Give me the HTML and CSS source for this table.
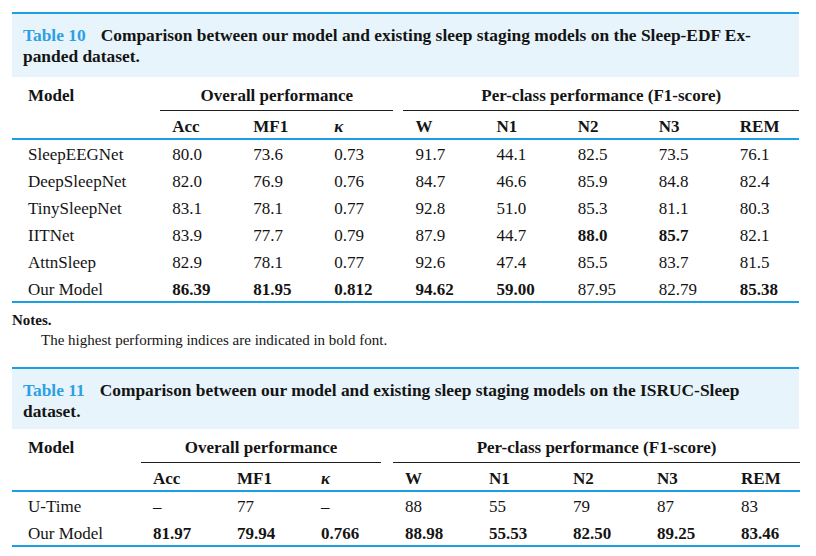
FILE: index.html
```html
<!DOCTYPE html>
<html>
<head>
<meta charset="utf-8">
<link rel="stylesheet" href="styles.css">
</head>
<body>
<div class="page">
  <section class="tbl-block t10">
    <div class="caption"><span class="label">Table 10</span>Comparison between our model and existing sleep staging models on the Sleep-EDF Ex-<br>panded dataset.</div>
    <table>
      <colgroup>
        <col class="c-model"><col class="c-num"><col class="c-num"><col class="c-num"><col class="c-num"><col class="c-num"><col class="c-num"><col class="c-num"><col class="c-last">
      </colgroup>
      <thead>
        <tr class="h1">
          <th class="model">Model</th>
          <th colspan="3" class="grp-cell left"><div class="grp">Overall performance</div></th>
          <th colspan="5" class="grp-cell"><div class="grp">Per-class performance (F1-score)</div></th>
        </tr>
        <tr class="h2">
          <th class="model"></th>
          <th>Acc</th><th>MF1</th><th><i>κ</i></th><th>W</th><th>N1</th><th>N2</th><th>N3</th><th>REM</th>
        </tr>
      </thead>
      <tbody>
        <tr><td class="model">SleepEEGNet</td><td>80.0</td><td>73.6</td><td>0.73</td><td>91.7</td><td>44.1</td><td>82.5</td><td>73.5</td><td>76.1</td></tr>
        <tr><td class="model">DeepSleepNet</td><td>82.0</td><td>76.9</td><td>0.76</td><td>84.7</td><td>46.6</td><td>85.9</td><td>84.8</td><td>82.4</td></tr>
        <tr><td class="model">TinySleepNet</td><td>83.1</td><td>78.1</td><td>0.77</td><td>92.8</td><td>51.0</td><td>85.3</td><td>81.1</td><td>80.3</td></tr>
        <tr><td class="model">IITNet</td><td>83.9</td><td>77.7</td><td>0.79</td><td>87.9</td><td>44.7</td><td><b>88.0</b></td><td><b>85.7</b></td><td>82.1</td></tr>
        <tr><td class="model">AttnSleep</td><td>82.9</td><td>78.1</td><td>0.77</td><td>92.6</td><td>47.4</td><td>85.5</td><td>83.7</td><td>81.5</td></tr>
        <tr class="last"><td class="model">Our Model</td><td><b>86.39</b></td><td><b>81.95</b></td><td><b>0.812</b></td><td><b>94.62</b></td><td><b>59.00</b></td><td>87.95</td><td>82.79</td><td><b>85.38</b></td></tr>
      </tbody>
    </table>
  </section>

  <div class="notes">
    <div class="notes-title">Notes.</div>
    <div class="notes-text">The highest performing indices are indicated in bold font.</div>
  </div>

  <section class="tbl-block t11">
    <div class="caption"><span class="label">Table 11</span>Comparison between our model and existing sleep staging models on the ISRUC-Sleep<br>dataset.</div>
    <table>
      <colgroup>
        <col class="c-model"><col class="c-num"><col class="c-num"><col class="c-num"><col class="c-num"><col class="c-num"><col class="c-num"><col class="c-num"><col class="c-last">
      </colgroup>
      <thead>
        <tr class="h1">
          <th class="model">Model</th>
          <th colspan="3" class="grp-cell left"><div class="grp">Overall performance</div></th>
          <th colspan="5" class="grp-cell"><div class="grp">Per-class performance (F1-score)</div></th>
        </tr>
        <tr class="h2">
          <th class="model"></th>
          <th>Acc</th><th>MF1</th><th><i>κ</i></th><th>W</th><th>N1</th><th>N2</th><th>N3</th><th>REM</th>
        </tr>
      </thead>
      <tbody>
        <tr><td class="model">U-Time</td><td>–</td><td>77</td><td>–</td><td>88</td><td>55</td><td>79</td><td>87</td><td>83</td></tr>
        <tr class="last"><td class="model">Our Model</td><td><b>81.97</b></td><td><b>79.94</b></td><td><b>0.766</b></td><td><b>88.98</b></td><td><b>55.53</b></td><td><b>82.50</b></td><td><b>89.25</b></td><td><b>83.46</b></td></tr>
      </tbody>
    </table>
  </section>
</div>
</body>
</html>
```

FILE: styles.css
```css
* {
  box-sizing: border-box;
}

body {
  margin: 0;
  background: #ffffff;
  font-family: "Liberation Serif", "Times New Roman", serif;
  color: #141414;
}

.page {
  width: 816px;
  padding: 12px 17px 0 12px;
}

.tbl-block {
  width: 787px;
  border-top: 2px solid #1a9fe3;
}

.caption {
  background: #e8f4fb;
  padding: 11px 11px 10px 11px;
  font-weight: bold;
  font-size: 17.4px;
  line-height: 21px;
  color: #141414;
}

.t11 .caption {
  padding-bottom: 7px;
}

.caption .label {
  color: #2ea0e2;
  margin-right: 15px;
}

table {
  border-collapse: collapse;
  border-spacing: 0;
  table-layout: fixed;
  width: 787px;
  font-size: 17px;
}

.t10 col.c-model { width: 148px; }
.t10 col.c-num { width: 81px; }
.t11 col.c-model { width: 129px; }
.t11 col.c-num { width: 84px; }
col.c-last { width: 71px; }

th, td {
  text-align: left;
  padding: 0 0 0 12px;
  white-space: nowrap;
  vertical-align: top;
}

th {
  font-weight: bold;
}

th.model, td.model {
  padding-left: 16px;
}

.h1 th {
  padding-top: 8px;
  line-height: 21px;
}

.h1 th.grp-cell {
  padding-left: 0;
}

.h1 th.grp-cell.left {
  padding-right: 10px;
}

.t11 .h1 th.grp-cell.left {
  padding-right: 12px;
}

.grp {
  text-align: center;
  padding-bottom: 4px;
  border-bottom: 1px solid #1e1e1e;
}

.h2 th {
  padding-top: 5px;
  padding-bottom: 1px;
  line-height: 21px;
  border-bottom: 2px solid #1a9fe3;
}

td {
  padding-top: 2px;
  line-height: 25px;
}

tr.last td {
  padding-top: 3px;
  line-height: 23px;
  border-bottom: 2px solid #1a9fe3;
}

td b {
  font-weight: bold;
}

.notes {
  margin-top: 8px;
  font-size: 15px;
  line-height: 19.5px;
}

.notes-title {
  font-weight: bold;
}

.notes-text {
  padding-left: 29px;
}

.t11 {
  margin-top: 17px;
}
```
